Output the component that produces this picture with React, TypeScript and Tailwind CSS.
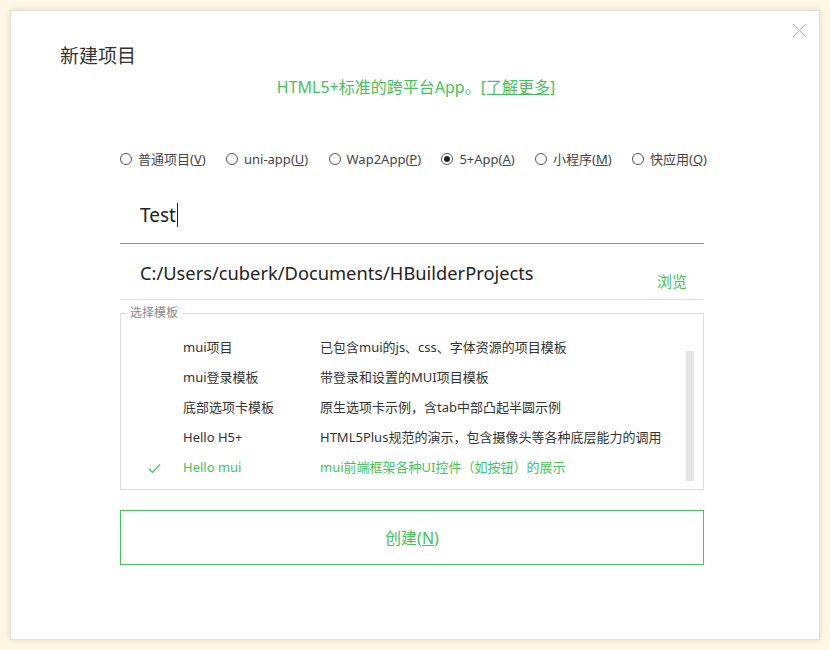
import React from "react";

const font = { fontFamily: '"Noto Sans", "Noto Sans CJK SC", sans-serif' };

function Radio({ label, mn, checked }: { label: string; mn: string; checked?: boolean }) {
  return (
    <div className="flex items-center gap-[6px] text-[13px] leading-[20px] text-[#444]">
      <span className="w-[12px] h-[12px] rounded-full border border-[#555] flex items-center justify-center">
        {checked && <span className="w-[6px] h-[6px] rounded-full bg-[#222]" />}
      </span>
      <span>
        {label}(<span className="underline">{mn}</span>)
      </span>
    </div>
  );
}

const rows = [
  ["mui项目", "已包含mui的js、css、字体资源的项目模板"],
  ["mui登录模板", "带登录和设置的MUI项目模板"],
  ["底部选项卡模板", "原生选项卡示例，含tab中部凸起半圆示例"],
  ["Hello H5+", "HTML5Plus规范的演示，包含摄像头等各种底层能力的调用"],
  ["Hello mui", "mui前端框架各种UI控件（如按钮）的展示"],
];

export default function App() {
  return (
    <div className="w-[830px] h-[650px] bg-[#fdf7e4] p-[10px]" style={font}>
      <div className="relative w-[810px] h-[630px] bg-white border border-[#dedede] shadow-[0_0_6px_rgba(0,0,0,0.12)]">
        <svg className="absolute left-[781px] top-[12px]" width="15" height="15" viewBox="0 0 15 15">
          <path d="M1 1L14 14M14 1L1 14" stroke="#b5b5b5" strokeWidth="1" />
        </svg>
        <div className="pl-[49px] pt-[33px] text-[19px] leading-[24px] text-[#333]">新建项目</div>
        <div className="mt-[9px] text-center text-[16px] leading-[20px] text-[#42c35a] pl-[2px]">
          HTML5+标准的跨平台App。<span className="underline">[了解更多]</span>
        </div>
        <div className="ml-[109px] w-[587px]">
          <div className="mt-[52px] flex justify-between">
            <Radio label="普通项目" mn="V" />
            <Radio label="uni-app" mn="U" />
            <Radio label="Wap2App" mn="P" />
            <Radio label="5+App" mn="A" checked />
            <Radio label="小程序" mn="M" />
            <Radio label="快应用" mn="Q" />
          </div>
          <div className="w-[584px]">
            <div className="mt-[19px] h-[56px] border-b border-[#5cb85c] flex items-start pt-[15px] pl-[20px]">
              <span className="text-[19px] leading-[24px] text-[#222]">Test</span>
              <span className="w-[1px] h-[24px] bg-[#222] ml-[1px]" />
            </div>
            <div className="h-[56px] border-b border-[#dcdcdc] flex items-start justify-between pt-[18px] pl-[20px] pr-[17px]">
              <span className="text-[18.3px] leading-[22px] text-[#222]">C:/Users/cuberk/Documents/HBuilderProjects</span>
              <span className="text-[15px] leading-[20px] text-[#42c35a] mt-[9px]">浏览</span>
            </div>
            <fieldset className="mt-[6px] h-[184px] border border-[#dcdcdc] relative px-0 pb-0">
              <legend className="ml-[5px] px-[4px] text-[12px] leading-[14px] text-[#888]">选择模板</legend>
              <div className="absolute right-[9px] top-[31px] w-[8px] h-[130px] bg-[#e4e4e4]" />
              <div className="pt-[13px] flex flex-col">
                {rows.map(([a, b], i) => {
                  const sel = i === 4;
                  return (
                    <div
                      key={a}
                      className={`h-[30px] flex items-center text-[13px] ${sel ? "text-[#42c35a]" : "text-[#333]"}`}
                    >
                      <span className="w-[62px] pl-[27px]">
                        {sel && (
                          <svg width="13" height="11" viewBox="0 0 13 11">
                            <path d="M1 6L4.5 9.5L12 1.5" fill="none" stroke="#42c35a" strokeWidth="1.2" />
                          </svg>
                        )}
                      </span>
                      <span className="w-[137px]">{a}</span>
                      <span>{b}</span>
                    </div>
                  );
                })}
              </div>
            </fieldset>
            <div className="mt-[20px] h-[55px] border border-[#3fc956] flex items-center justify-center text-[16px] text-[#42c35a]">
              创建(<span className="underline">N</span>)
            </div>
          </div>
        </div>
      </div>
    </div>
  );
}
